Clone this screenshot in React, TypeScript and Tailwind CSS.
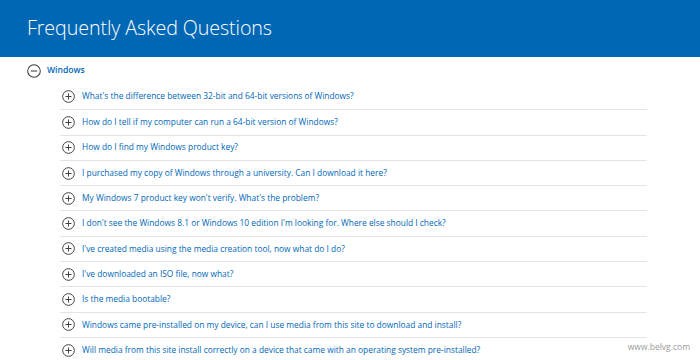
import React from 'react';

const questions = [
  "What's the difference between 32-bit and 64-bit versions of Windows?",
  'How do I tell if my computer can run a 64-bit version of Windows?',
  'How do I find my Windows product key?',
  'I purchased my copy of Windows through a university. Can I download it here?',
  "My Windows 7 product key won't verify. What's the problem?",
  "I don't see the Windows 8.1 or Windows 10 edition I'm looking for. Where else should I check?",
  "I've created media using the media creation tool, now what do I do?",
  "I've downloaded an ISO file, now what?",
  'Is the media bootable?',
  'Windows came pre-installed on my device, can I use media from this site to download and install?',
  'Will media from this site install correctly on a device that came with an operating system pre-installed?',
];

const CircleIcon = ({ plus, size }: { plus: boolean; size: number }) => (
  <svg width={size} height={size} viewBox="0 0 16 16" fill="none" className="shrink-0">
    <circle cx="8" cy="8" r="7.2" stroke="#3f3f3f" strokeWidth="1.2" />
    <line x1="4.3" y1="8" x2="11.7" y2="8" stroke="#3f3f3f" strokeWidth="1.2" />
    {plus && <line x1="8" y1="4.3" x2="8" y2="11.7" stroke="#3f3f3f" strokeWidth="1.2" />}
  </svg>
);

export default function App() {
  return (
    <div className="relative w-[700px] h-[360px] overflow-hidden bg-white" style={{ fontFamily: '"Open Sans", sans-serif' }}>
      <div className="h-[57px] bg-[#0067b5] flex items-center pl-[27px] pb-[2px]">
        <h1 className="text-[19.7px] font-light text-white tracking-[-0.1px]">Frequently Asked Questions</h1>
      </div>

      <div className="h-[27px] flex items-center pl-[27px] gap-[6px]">
        <CircleIcon plus={false} size={14} />
        <span className="text-[8.6px] font-semibold text-[#0067b8]">Windows</span>
      </div>

      <ul className="ml-[60px] w-[587px]">
        {questions.map((q, i) => (
          <li
            key={i}
            className={`h-[25.3px] flex items-center gap-[7px] pl-[2px] ${i > 0 ? 'border-t border-[#e4e4e4]' : ''}`}
          >
            <CircleIcon plus={true} size={13} />
            <span className="text-[8.4px] font-medium text-[#0067b8] whitespace-nowrap">{q}</span>
          </li>
        ))}
      </ul>

      <div className="absolute right-[10px] bottom-[6px] text-[8.5px] text-[#9a9a9a]">www.belvg.com</div>
    </div>
  );
}
